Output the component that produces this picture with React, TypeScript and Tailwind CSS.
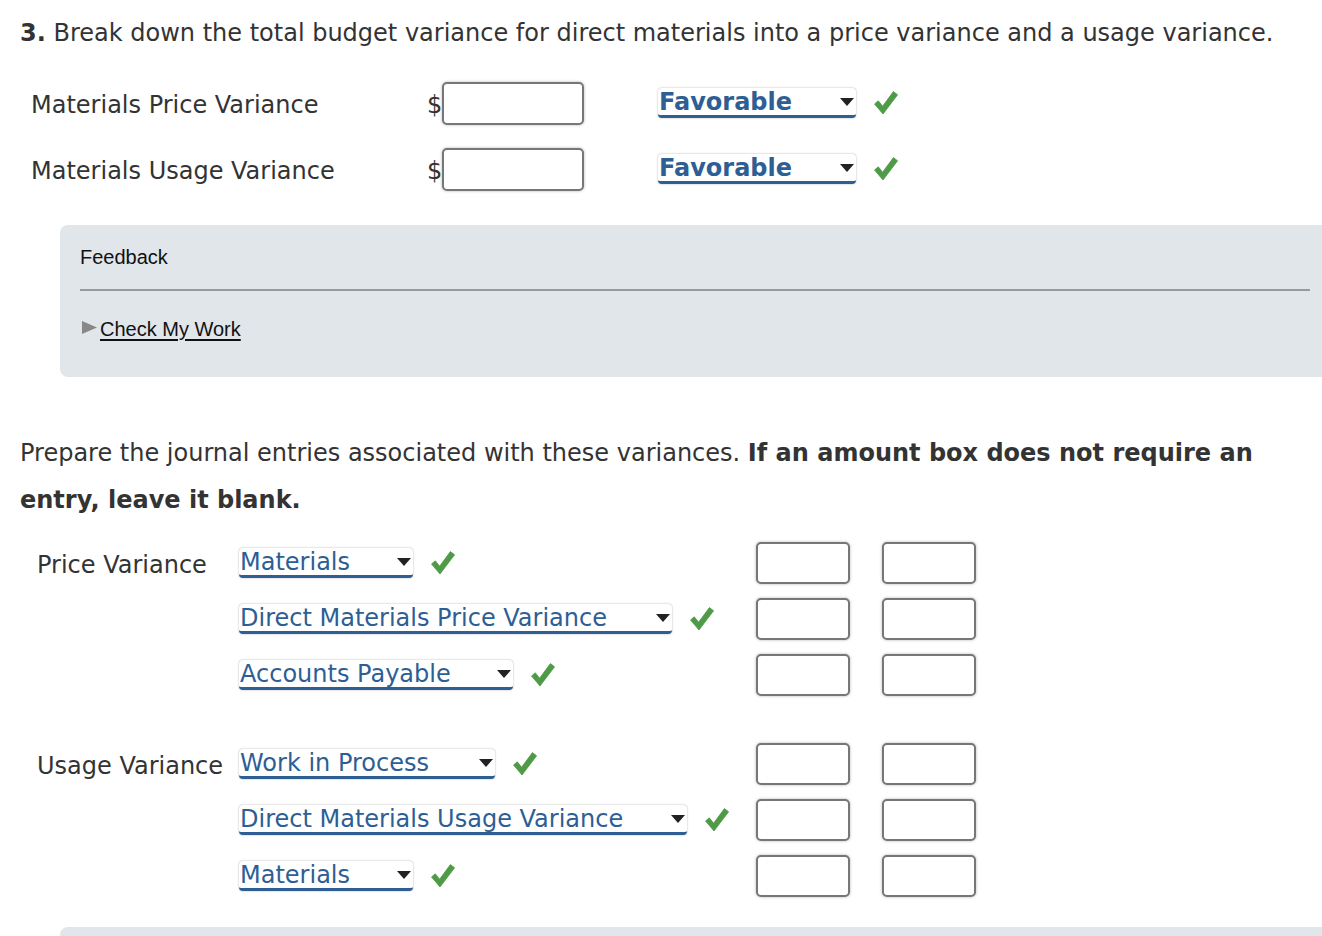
import React from "react";

const verdana = "font-['DejaVu_Sans',Verdana,sans-serif]";

function Check() {
  return (
    <svg width="26" height="26" viewBox="0 0 26 26" className="shrink-0">
      <path
        d="M1.5 14 L5.3 10.8 L9.6 16.2 L20.4 1.6 L24.6 4.8 L10 24 Z"
        fill="#4e9a47"
        stroke="#4e9a47"
        strokeWidth="0.8"
        strokeLinejoin="round"
      />
    </svg>
  );
}

function Arrow() {
  return (
    <svg width="14" height="8" viewBox="0 0 14 8" className="shrink-0">
      <path d="M0 0 L14 0 L7 8 Z" fill="#222" />
    </svg>
  );
}

function Select({ label, width, bold = false }: { label: string; width: string; bold?: boolean }) {
  return (
    <div
      className={`${width} h-[30px] flex items-center justify-between bg-white rounded-[4px] shadow-[0_0_2px_rgba(0,0,0,0.35)] border-b-[3px] border-[#2d5e94] pl-[1px] pr-[2px] text-[#2d5e94] leading-none ${bold ? "font-bold" : ""}`}
    >
      <span className="whitespace-nowrap pt-[1px]">{label}</span>
      <Arrow />
    </div>
  );
}

function AmountBox({ w = "w-[94px]", h = "h-[42px]" }: { w?: string; h?: string }) {
  return <div className={`${w} ${h} rounded-[5px] border-2 border-[#777] bg-white shadow-[0_0_3px_rgba(0,0,0,0.3)]`} />;
}

type Entry = { label: string; width: string };

function JournalGroup({ title, entries }: { title: string; entries: Entry[] }) {
  return (
    <div className="flex flex-col">
      {entries.map((e, i) => (
        <div key={i} className="flex items-center h-[56px]">
          <div className="w-[239px] pl-[37px] pt-[4px] whitespace-nowrap text-[#333]">{i === 0 ? title : ""}</div>
          <div className="w-[517px] flex items-center gap-[17px]">
            <Select label={e.label} width={e.width} />
            <Check />
          </div>
          <div className="flex gap-[32px]">
            <AmountBox />
            <AmountBox />
          </div>
        </div>
      ))}
    </div>
  );
}

export default function App() {
  return (
    <div className={`w-[1322px] h-[936px] overflow-hidden bg-white text-[#333] text-[24px] ${verdana}`}>
      {/* Question */}
      <p className="pl-[20px] pt-[18px] leading-[30px] whitespace-nowrap">
        <span className="font-bold">3.</span> Break down the total budget variance for direct materials into a price
        variance and a usage variance.
      </p>

      <div className="mt-[22px]">
        {["Materials Price Variance", "Materials Usage Variance"].map((label) => (
          <div key={label} className="flex items-center h-[66px]">
            <div className="w-[396px] ml-[31px] pt-[3px] whitespace-nowrap">{label}</div>
            <span className="w-[15px] pt-[3px]">$</span>
            <AmountBox w="w-[142px]" h="h-[43px]" />
            <div className="ml-[74px] flex items-center gap-[17px]">
              <Select label="Favorable" width="w-[198px]" bold />
              <Check />
            </div>
          </div>
        ))}
      </div>

      {/* Feedback */}
      <div className="mt-[23px] ml-[60px] h-[152px] bg-[#e0e6ea] rounded-l-[8px] pl-[20px] pr-[12px] pt-[20px] font-['Liberation_Sans',Arial,sans-serif] text-[20px] text-[#111]">
        <div className="leading-[24px]">Feedback</div>
        <div className="mt-[20px] border-t-2 border-[#999]" />
        <div className="mt-[26px] flex items-center leading-[24px]">
          <svg width="16" height="14" viewBox="0 0 16 14" className="ml-[2px] mr-[2px] -mt-[2px]">
            <path d="M0 0 L15 6.5 L0 13 Z" fill="#888" />
          </svg>
          <span className="underline underline-offset-[3px]">Check My Work</span>
        </div>
      </div>

      {/* Journal */}
      <p className="mt-[53px] pl-[20px] leading-[47px] whitespace-nowrap">
        Prepare the journal entries associated with these variances.{" "}
        <span className="font-bold">If an amount box does not require an</span>
        <br />
        <span className="font-bold">entry, leave it blank.</span>
      </p>

      <div className="mt-[11px]">
        <JournalGroup
          title="Price Variance"
          entries={[
            { label: "Materials", width: "w-[174px]" },
            { label: "Direct Materials Price Variance", width: "w-[433px]" },
            { label: "Accounts Payable", width: "w-[274px]" },
          ]}
        />
      </div>
      <div className="mt-[33px]">
        <JournalGroup
          title="Usage Variance"
          entries={[
            { label: "Work in Process", width: "w-[256px]" },
            { label: "Direct Materials Usage Variance", width: "w-[448px]" },
            { label: "Materials", width: "w-[174px]" },
          ]}
        />
      </div>

      <div className="mt-[23px] ml-[60px] h-[40px] bg-[#e0e6ea] rounded-tl-[8px]" />
    </div>
  );
}
